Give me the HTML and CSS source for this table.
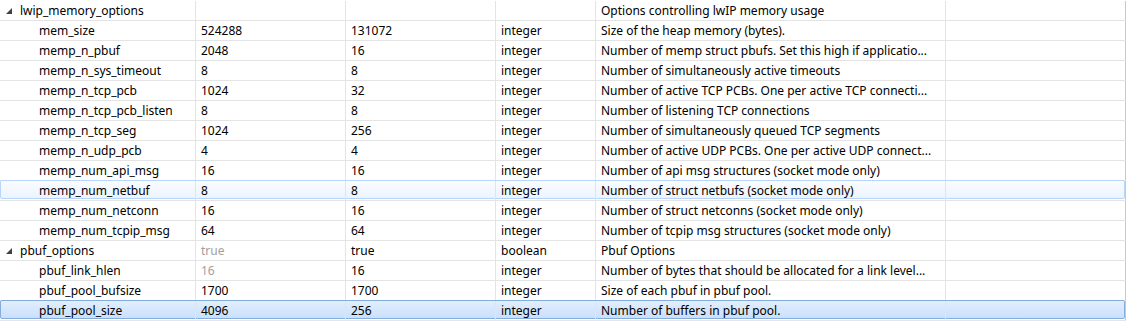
FILE: index.html
```html
<!DOCTYPE html>
<html>
<head>
<meta charset="utf-8">
<link rel="stylesheet" href="styles.css">
</head>
<body>
<div class="tree">
  <div class="row">
    <div class="cell name parent"><svg class="twisty" width="6" height="6" viewBox="0 0 6 6"><polygon points="6,0 6,6 0,6" /></svg>lwip_memory_options</div>
    <div class="cell"></div><div class="cell"></div><div class="cell"></div>
    <div class="cell">Options controlling lwIP memory usage</div><div class="cell"></div>
  </div>
  <div class="row">
    <div class="cell name">mem_size</div><div class="cell">524288</div><div class="cell">131072</div><div class="cell">integer</div>
    <div class="cell">Size of the heap memory (bytes).</div><div class="cell"></div>
  </div>
  <div class="row">
    <div class="cell name">memp_n_pbuf</div><div class="cell">2048</div><div class="cell">16</div><div class="cell">integer</div>
    <div class="cell">Number of memp struct pbufs. Set this high if applicatio...</div><div class="cell"></div>
  </div>
  <div class="row">
    <div class="cell name">memp_n_sys_timeout</div><div class="cell">8</div><div class="cell">8</div><div class="cell">integer</div>
    <div class="cell">Number of simultaneously active timeouts</div><div class="cell"></div>
  </div>
  <div class="row">
    <div class="cell name">memp_n_tcp_pcb</div><div class="cell">1024</div><div class="cell">32</div><div class="cell">integer</div>
    <div class="cell">Number of active TCP PCBs. One per active TCP connecti...</div><div class="cell"></div>
  </div>
  <div class="row">
    <div class="cell name">memp_n_tcp_pcb_listen</div><div class="cell">8</div><div class="cell">8</div><div class="cell">integer</div>
    <div class="cell">Number of listening TCP connections</div><div class="cell"></div>
  </div>
  <div class="row">
    <div class="cell name">memp_n_tcp_seg</div><div class="cell">1024</div><div class="cell">256</div><div class="cell">integer</div>
    <div class="cell">Number of simultaneously queued TCP segments</div><div class="cell"></div>
  </div>
  <div class="row">
    <div class="cell name">memp_n_udp_pcb</div><div class="cell">4</div><div class="cell">4</div><div class="cell">integer</div>
    <div class="cell">Number of active UDP PCBs. One per active UDP connect...</div><div class="cell"></div>
  </div>
  <div class="row">
    <div class="cell name">memp_num_api_msg</div><div class="cell">16</div><div class="cell">16</div><div class="cell">integer</div>
    <div class="cell">Number of api msg structures (socket mode only)</div><div class="cell"></div>
  </div>
  <div class="row hover">
    <div class="cell name">memp_num_netbuf</div><div class="cell">8</div><div class="cell">8</div><div class="cell">integer</div>
    <div class="cell">Number of struct netbufs (socket mode only)</div><div class="cell"></div>
  </div>
  <div class="row">
    <div class="cell name">memp_num_netconn</div><div class="cell">16</div><div class="cell">16</div><div class="cell">integer</div>
    <div class="cell">Number of struct netconns (socket mode only)</div><div class="cell"></div>
  </div>
  <div class="row">
    <div class="cell name">memp_num_tcpip_msg</div><div class="cell">64</div><div class="cell">64</div><div class="cell">integer</div>
    <div class="cell">Number of tcpip msg structures (socket mode only)</div><div class="cell"></div>
  </div>
  <div class="row">
    <div class="cell name parent"><svg class="twisty" width="6" height="6" viewBox="0 0 6 6"><polygon points="6,0 6,6 0,6" /></svg>pbuf_options</div>
    <div class="cell muted">true</div><div class="cell">true</div><div class="cell">boolean</div>
    <div class="cell">Pbuf Options</div><div class="cell"></div>
  </div>
  <div class="row">
    <div class="cell name">pbuf_link_hlen</div><div class="cell muted">16</div><div class="cell">16</div><div class="cell">integer</div>
    <div class="cell">Number of bytes that should be allocated for a link level...</div><div class="cell"></div>
  </div>
  <div class="row">
    <div class="cell name">pbuf_pool_bufsize</div><div class="cell">1700</div><div class="cell">1700</div><div class="cell">integer</div>
    <div class="cell">Size of each pbuf in pbuf pool.</div><div class="cell"></div>
  </div>
  <div class="row selected">
    <div class="cell name">pbuf_pool_size</div><div class="cell">4096</div><div class="cell">256</div><div class="cell">integer</div>
    <div class="cell">Number of buffers in pbuf pool.</div><div class="cell"></div>
  </div>
</div>
</body>
</html>
```
FILE: styles.css
```css
html, body {
  margin: 0;
  background: #ffffff;
}
body {
  font-family: "Noto Sans", "Liberation Sans", sans-serif;
  font-size: 12px;
  color: #000000;
}
.tree {
  padding-top: 1px;
  width: 1126px;
}
.row {
  position: relative;
  display: grid;
  grid-template-columns: 196px 150px 150px 100px 350px 180px;
  height: 19px;
  border-bottom: 1px solid #e4e4e4;
}
.cell {
  position: relative;
  z-index: 1;
  border-right: 1px solid #e4e4e4;
  padding: 0 4px 0 5px;
  line-height: 19px;
  white-space: nowrap;
  overflow: hidden;
}
.cell.name {
  padding-left: 39px;
}
.cell.name.parent {
  padding-left: 20px;
}
.row .cell:last-child {
  border-right-color: #c8c8c8;
}
.twisty {
  position: absolute;
  left: 6px;
  top: 7px;
  fill: #404040;
}
.muted {
  color: #a0a0a0;
}
.row.hover::before,
.row.selected::before {
  content: "";
  position: absolute;
  left: 0;
  right: 1px;
  top: -1px;
  bottom: 1px;
  border-radius: 2px;
  box-sizing: border-box;
  z-index: 0;
}
.row.hover::before {
  border: 1px solid #b8d6fb;
  background: linear-gradient(#fafcfe, #ebf4fe);
}
.row.selected::before {
  border: 1px solid #84acdd;
  background: linear-gradient(#e2eefc, #c9e0fc);
}
```
